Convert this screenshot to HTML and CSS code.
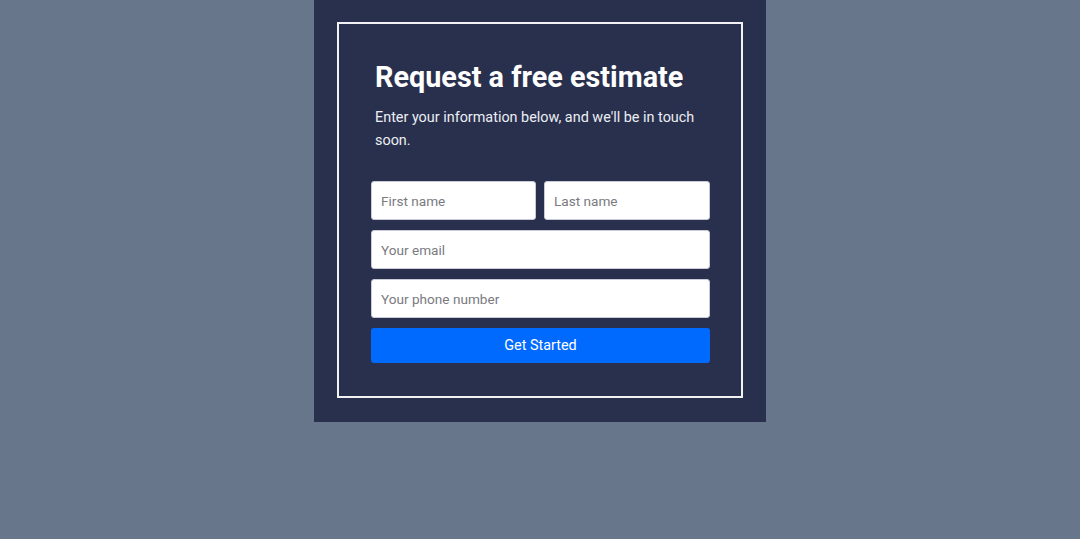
FILE: index.html
```html
<!DOCTYPE html>
<html lang="en">
<head>
<meta charset="utf-8">
<title>Request a free estimate</title>
<link rel="stylesheet" href="styles.css">
</head>
<body>
<div class="card">
  <div class="frame">
    <div class="intro">
      <h1 class="title">Request a free estimate</h1>
      <p class="lead">Enter your information below, and we'll be in touch soon.</p>
    </div>
    <form class="form">
      <div class="row">
        <input class="field" type="text" placeholder="First name">
        <input class="field" type="text" placeholder="Last name">
      </div>
      <input class="field" type="email" placeholder="Your email">
      <input class="field" type="tel" placeholder="Your phone number">
      <button class="submit" type="button">Get Started</button>
    </form>
  </div>
</div>
</body>
</html>
```
FILE: styles.css
```css
* { box-sizing: border-box; }
html, body { margin: 0; padding: 0; }
body {
  background: #67768a;
  font-family: Roboto, "Liberation Sans", Arial, sans-serif;
  height: 539px;
  overflow: hidden;
}
.card {
  width: 452px;
  margin: 0 auto;
  background: #29304e;
  padding: 22px 23px 24px;
}
.frame {
  border: 2px solid #f2f2f5;
  padding: 36px 31px 33px 32px;
}
.intro { padding-left: 4px; }
.title {
  margin: 0;
  font-size: 28.8px;
  font-weight: 700;
  line-height: normal;
  color: #ffffff;
}
.lead {
  margin: 12px 0 0;
  font-size: 14.4px;
  line-height: 23px;
  color: #eceef3;
}
.form {
  margin-top: 29px;
  display: flex;
  flex-direction: column;
  gap: 10px;
}
.row {
  display: grid;
  grid-template-columns: 165px 1fr;
  gap: 8px;
}
.field {
  width: 100%;
  height: 39px;
  border: 1px solid #c9ccd6;
  border-radius: 3px;
  background: #ffffff;
  padding: 0 9px;
  font-family: inherit;
  font-size: 13.6px;
  color: #333;
  outline: none;
}
.field::placeholder { color: #7a7a7f; }
.submit {
  height: 35px;
  border: none;
  border-radius: 3px;
  background: #006aff;
  color: #ffffff;
  font-family: inherit;
  font-size: 14.4px;
  cursor: pointer;
}
```
